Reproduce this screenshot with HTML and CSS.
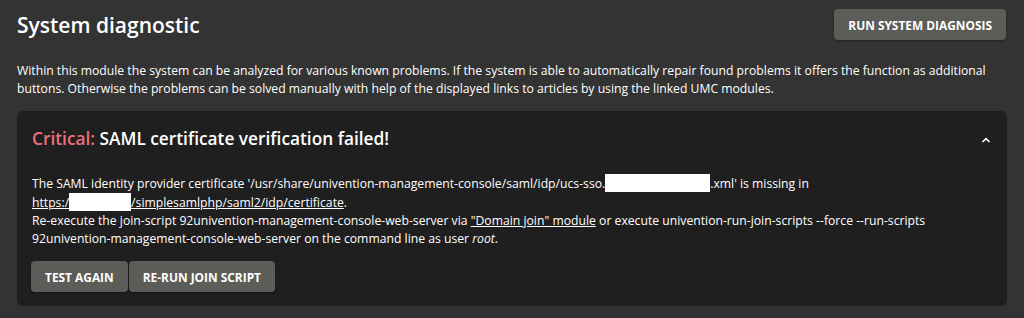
FILE: index.html
```html
<!DOCTYPE html>
<html>
<head>
<meta charset="utf-8">
<link rel="stylesheet" href="styles.css">
</head>
<body>
<div class="page">
  <header class="head">
    <h1 class="title">System diagnostic</h1>
    <button class="btn">Run system diagnosis</button>
  </header>
  <p class="intro">Within this module the system can be analyzed for various known problems. If the system is able to automatically repair found problems it offers the function as additional buttons. Otherwise the problems can be solved manually with help of the displayed links to articles by using the linked UMC modules.</p>
  <section class="card">
    <div class="card-head">
      <h2 class="card-title"><span class="crit">Critical:</span> SAML certificate verification failed!</h2>
      <svg class="chev" width="10" height="6" viewBox="0 0 10 6"><path d="M1.5 5 L5 1.6 L8.5 5" fill="none" stroke="#fff" stroke-width="1.6"/></svg>
    </div>
    <div class="card-body">
      <p class="msg">The SAML identity provider certificate '/usr/share/univention-management-console/saml/idp/ucs-sso.<span class="redact r1"></span>.xml' is missing in<br><a href="#" class="link">https:/<span class="redact r2"></span>/simplesamlphp/saml2/idp/certificate</a>.<br>Re-execute the join-script 92univention-management-console-web-server via <a href="#" class="link">"Domain join" module</a> or execute univention-run-join-scripts --force --run-scripts 92univention-management-console-web-server on the command line as user <i>root</i>.</p>
      <div class="actions">
        <button class="btn">Test again</button>
        <button class="btn">Re-run join script</button>
      </div>
    </div>
  </section>
</div>
</body>
</html>
```
FILE: styles.css
```css
html, body {
  margin: 0;
  padding: 0;
  background: #333333;
}
body {
  font-family: "Open Sans", "Noto Sans", sans-serif;
  color: #ffffff;
}
.page {
  padding: 9px 17px 0 17px;
}
.head {
  display: flex;
  justify-content: space-between;
  align-items: flex-start;
}
.title {
  margin: 2px 0 0 0;
  font-size: 21px;
  font-weight: 600;
  line-height: 28px;
}
.btn {
  font-family: "Open Sans", "Noto Sans", sans-serif;
  background: #5c5c58;
  color: #ffffff;
  border: none;
  border-radius: 4px;
  height: 31px;
  padding: 0 14px;
  font-size: 11.9px;
  font-weight: 700;
  text-transform: uppercase;
  box-shadow: 0 1px 2px rgba(0,0,0,0.35);
}
.head .btn {
  margin-right: 1px;
  padding: 0 14px 0 14px;
}
.intro {
  margin: 22px 0 0 0;
  font-size: 12.2px;
  line-height: 18px;
  padding-right: 20px;
}
.card {
  margin-top: 13px;
  width: 990px;
  background: #1f1f1f;
  border-radius: 6px;
  padding: 15px 15px 14px 15px;
  box-sizing: border-box;
}
.card-head {
  display: flex;
  justify-content: space-between;
  align-items: center;
}
.card-title {
  margin: 0;
  font-size: 17.3px;
  font-weight: 600;
  line-height: 26px;
}
.crit {
  color: #ec6f7d;
}
.chev {
  margin-right: 1px;
  margin-top: 1px;
}
.msg {
  margin: 22px 0 0 0;
  font-size: 12.2px;
  line-height: 18px;
}
.link {
  color: #ffffff;
  text-decoration: underline;
}
.redact {
  display: inline-block;
  background: #ffffff;
  height: 18px;
  vertical-align: -4px;
}
.r1 { width: 105px; }
.r2 { width: 62px; }
.actions {
  display: flex;
  gap: 1px;
  margin-top: 13px;
  margin-left: -1px;
}
.actions .btn {
  padding: 0 14px;
}
```
